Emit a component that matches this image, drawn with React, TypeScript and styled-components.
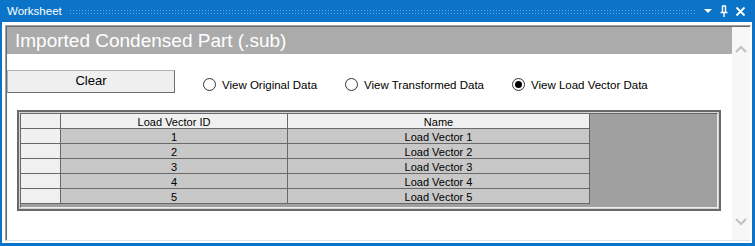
import styled, { createGlobalStyle } from "styled-components";

const GlobalStyle = createGlobalStyle`
  html, body {
    margin: 0;
    padding: 0;
    background: #ffffff;
  }
  * {
    box-sizing: border-box;
  }
`;

const Window = styled.div`
  width: 755px;
  height: 246px;
  display: flex;
  flex-direction: column;
  background: #0b74c8;
  padding: 0 3px 3px 2px;
  font-family: "Liberation Sans", Arial, sans-serif;
`;

const TitleBar = styled.div`
  height: 22px;
  display: flex;
  align-items: center;
  padding-left: 5px;
  color: #ffffff;
`;

const TitleText = styled.span`
  font-size: 11.5px;
  line-height: 22px;
`;

const TitleDots = styled.div`
  flex: 1;
  height: 5px;
  margin: 0 8px 0 7px;
  background-image: radial-gradient(circle, #5aa6e4 0.8px, transparent 0.9px);
  background-size: 3px 3px;
`;

const TitleIcons = styled.div`
  display: flex;
  align-items: center;
  gap: 6px;
  padding-right: 6px;
`;

const Body = styled.div`
  flex: 1;
  background: #ffffff;
  padding: 3px 1px 2px 3px;
  display: flex;
`;

const Panel = styled.div`
  flex: 1;
  display: flex;
  border-top: 1px solid #a0a0a0;
  border-left: 1px solid #a0a0a0;
  border-right: 1px solid #ffffff;
  border-bottom: 1px solid #e3e3e3;
  box-shadow: inset 1px 1px 0 #696969;
  padding: 1px 0 0 1px;
`;

const Main = styled.div`
  flex: 1;
  display: flex;
  flex-direction: column;
`;

const Header = styled.div`
  height: 27px;
  background: #ababab;
  color: #ffffff;
  font-size: 19px;
  line-height: 28px;
  padding-left: 8px;
  white-space: nowrap;
`;

const Controls = styled.div`
  display: flex;
  align-items: flex-start;
  margin-top: 16px;
`;

const Button = styled.div`
  width: 168px;
  height: 23px;
  background: #efefef;
  border: 1px solid #b0b0b0;
  border-right-color: #6e6e6e;
  border-bottom-color: #6e6e6e;
  font-size: 13px;
  line-height: 20px;
  text-align: center;
  color: #000000;
`;

const RadioGroup = styled.div`
  display: flex;
  margin-left: 28px;
  margin-top: 8px;
  gap: 28px;
`;

const RadioItem = styled.label`
  display: flex;
  align-items: center;
  gap: 6px;
  font-size: 11.5px;
  color: #000000;
  white-space: nowrap;
`;

const RadioCircle = styled.span<{ $checked?: boolean }>`
  width: 13px;
  height: 13px;
  border-radius: 50%;
  border: 1px solid #333333;
  background: #ffffff;
  display: flex;
  align-items: center;
  justify-content: center;
  &::after {
    content: "";
    width: 7px;
    height: 7px;
    border-radius: 50%;
    background: ${(p) => (p.$checked ? "#000000" : "transparent")};
  }
`;

const GridFrame = styled.div`
  margin: 17px 0 0 10px;
  width: 704px;
  height: 101px;
  border: 2px solid #696969;
  padding: 1px;
  background: #d4d4d4;
  display: flex;
`;

const GridInner = styled.div`
  flex: 1;
  background: #a0a0a0;
  border-top: 1px solid #696969;
  border-left: 1px solid #696969;
  border-right: 1px solid #ededed;
  border-bottom: 1px solid #ededed;
`;

const GridTable = styled.div`
  display: grid;
  grid-template-columns: 40px 227px 302px;
  grid-auto-rows: 15px;
`;

const Cell = styled.div<{ $kind: "header" | "rowhead" | "data" }>`
  background: ${(p) => (p.$kind === "data" ? "#c8c8c8" : "#f0f0f0")};
  border-right: 1px solid #696969;
  border-bottom: 1px solid #696969;
  font-size: 11px;
  line-height: 16px;
  text-align: center;
  color: #000000;
  white-space: nowrap;
  overflow: hidden;
`;

const Scrollbar = styled.div`
  width: 18px;
  background: #f7f7f7;
  display: flex;
  flex-direction: column;
  justify-content: space-between;
  align-items: center;
  padding: 18px 0 14px;
`;

const rows = [1, 2, 3, 4, 5];

const App = () => {
  return (
    <>
      <GlobalStyle />
      <Window>
        <TitleBar>
          <TitleText>Worksheet</TitleText>
          <TitleDots />
          <TitleIcons>
            <svg width="10" height="10" viewBox="0 0 10 10">
              <path d="M1 3 L9 3 L5 7 Z" fill="#ffffff" />
            </svg>
            <svg width="10" height="12" viewBox="0 0 10 12">
              <path
                d="M3 1 H7 M3.5 1 V7 M6.5 1 V7 M1.5 7.5 H8.5 M5 8 V12"
                stroke="#ffffff"
                strokeWidth="1.4"
                fill="none"
              />
            </svg>
            <svg width="11" height="11" viewBox="0 0 11 11">
              <path
                d="M1.5 1.5 L9.5 9.5 M9.5 1.5 L1.5 9.5"
                stroke="#ffffff"
                strokeWidth="1.8"
              />
            </svg>
          </TitleIcons>
        </TitleBar>
        <Body>
          <Panel>
            <Main>
              <Header>Imported Condensed Part (.sub)</Header>
              <Controls>
                <Button>Clear</Button>
                <RadioGroup>
                  <RadioItem>
                    <RadioCircle />
                    View Original Data
                  </RadioItem>
                  <RadioItem>
                    <RadioCircle />
                    View Transformed Data
                  </RadioItem>
                  <RadioItem>
                    <RadioCircle $checked />
                    View Load Vector Data
                  </RadioItem>
                </RadioGroup>
              </Controls>
              <GridFrame>
                <GridInner>
                  <GridTable>
                    <Cell $kind="header" />
                    <Cell $kind="header">Load Vector ID</Cell>
                    <Cell $kind="header">Name</Cell>
                    {rows.map((n) => (
                      <>
                        <Cell key={`h${n}`} $kind="rowhead" />
                        <Cell key={`i${n}`} $kind="data">
                          {n}
                        </Cell>
                        <Cell key={`n${n}`} $kind="data">
                          Load Vector {n}
                        </Cell>
                      </>
                    ))}
                  </GridTable>
                </GridInner>
              </GridFrame>
            </Main>
            <Scrollbar>
              <svg width="12" height="8" viewBox="0 0 12 8">
                <path d="M1 7 L6 2 L11 7" stroke="#c2c2c2" strokeWidth="2" fill="none" />
              </svg>
              <svg width="12" height="8" viewBox="0 0 12 8">
                <path d="M1 1 L6 6 L11 1" stroke="#c2c2c2" strokeWidth="2" fill="none" />
              </svg>
            </Scrollbar>
          </Panel>
        </Body>
      </Window>
    </>
  );
};

export default App;
